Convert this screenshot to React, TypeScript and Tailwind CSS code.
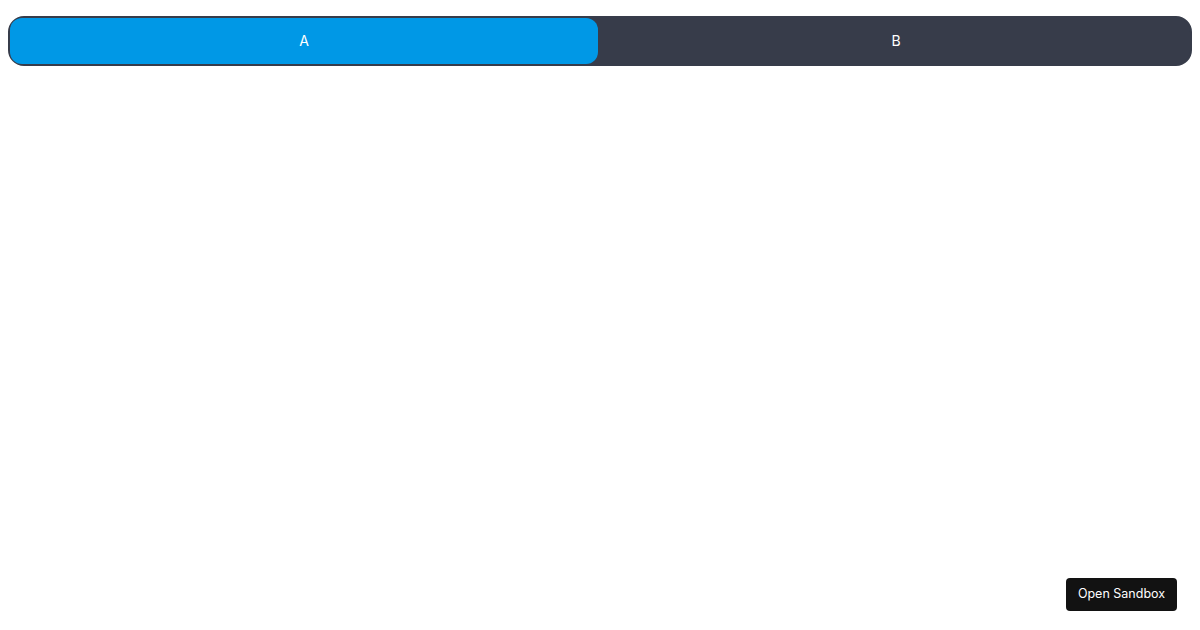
import React, { useState } from "react";

export default function App() {
  const [tab, setTab] = useState("A");
  return (
    <div className="min-h-[630px] bg-white px-2 pt-4" style={{ fontFamily: "Inter, 'Noto Sans', sans-serif" }}>
      <div className="flex h-[50px] rounded-2xl border-2 border-[#373c4a] bg-[#373c4a]">
        {["A", "B"].map((t, i) => (
          <button
            key={t}
            onClick={() => setTab(t)}
            className={
              (i === 0 ? "w-[588px] shrink-0 " : "flex-1 pl-[4px] ") +
              (tab === t
                ? "rounded-xl bg-[#0098e6] text-sm text-white"
                : "rounded-xl bg-transparent text-sm text-white")
            }
          >
            {t}
          </button>
        ))}
      </div>
      <button className="fixed bottom-[19px] right-[23px] h-[33px] w-[111px] rounded bg-[#121212] text-[12.5px] text-white">
        Open Sandbox
      </button>
    </div>
  );
}
